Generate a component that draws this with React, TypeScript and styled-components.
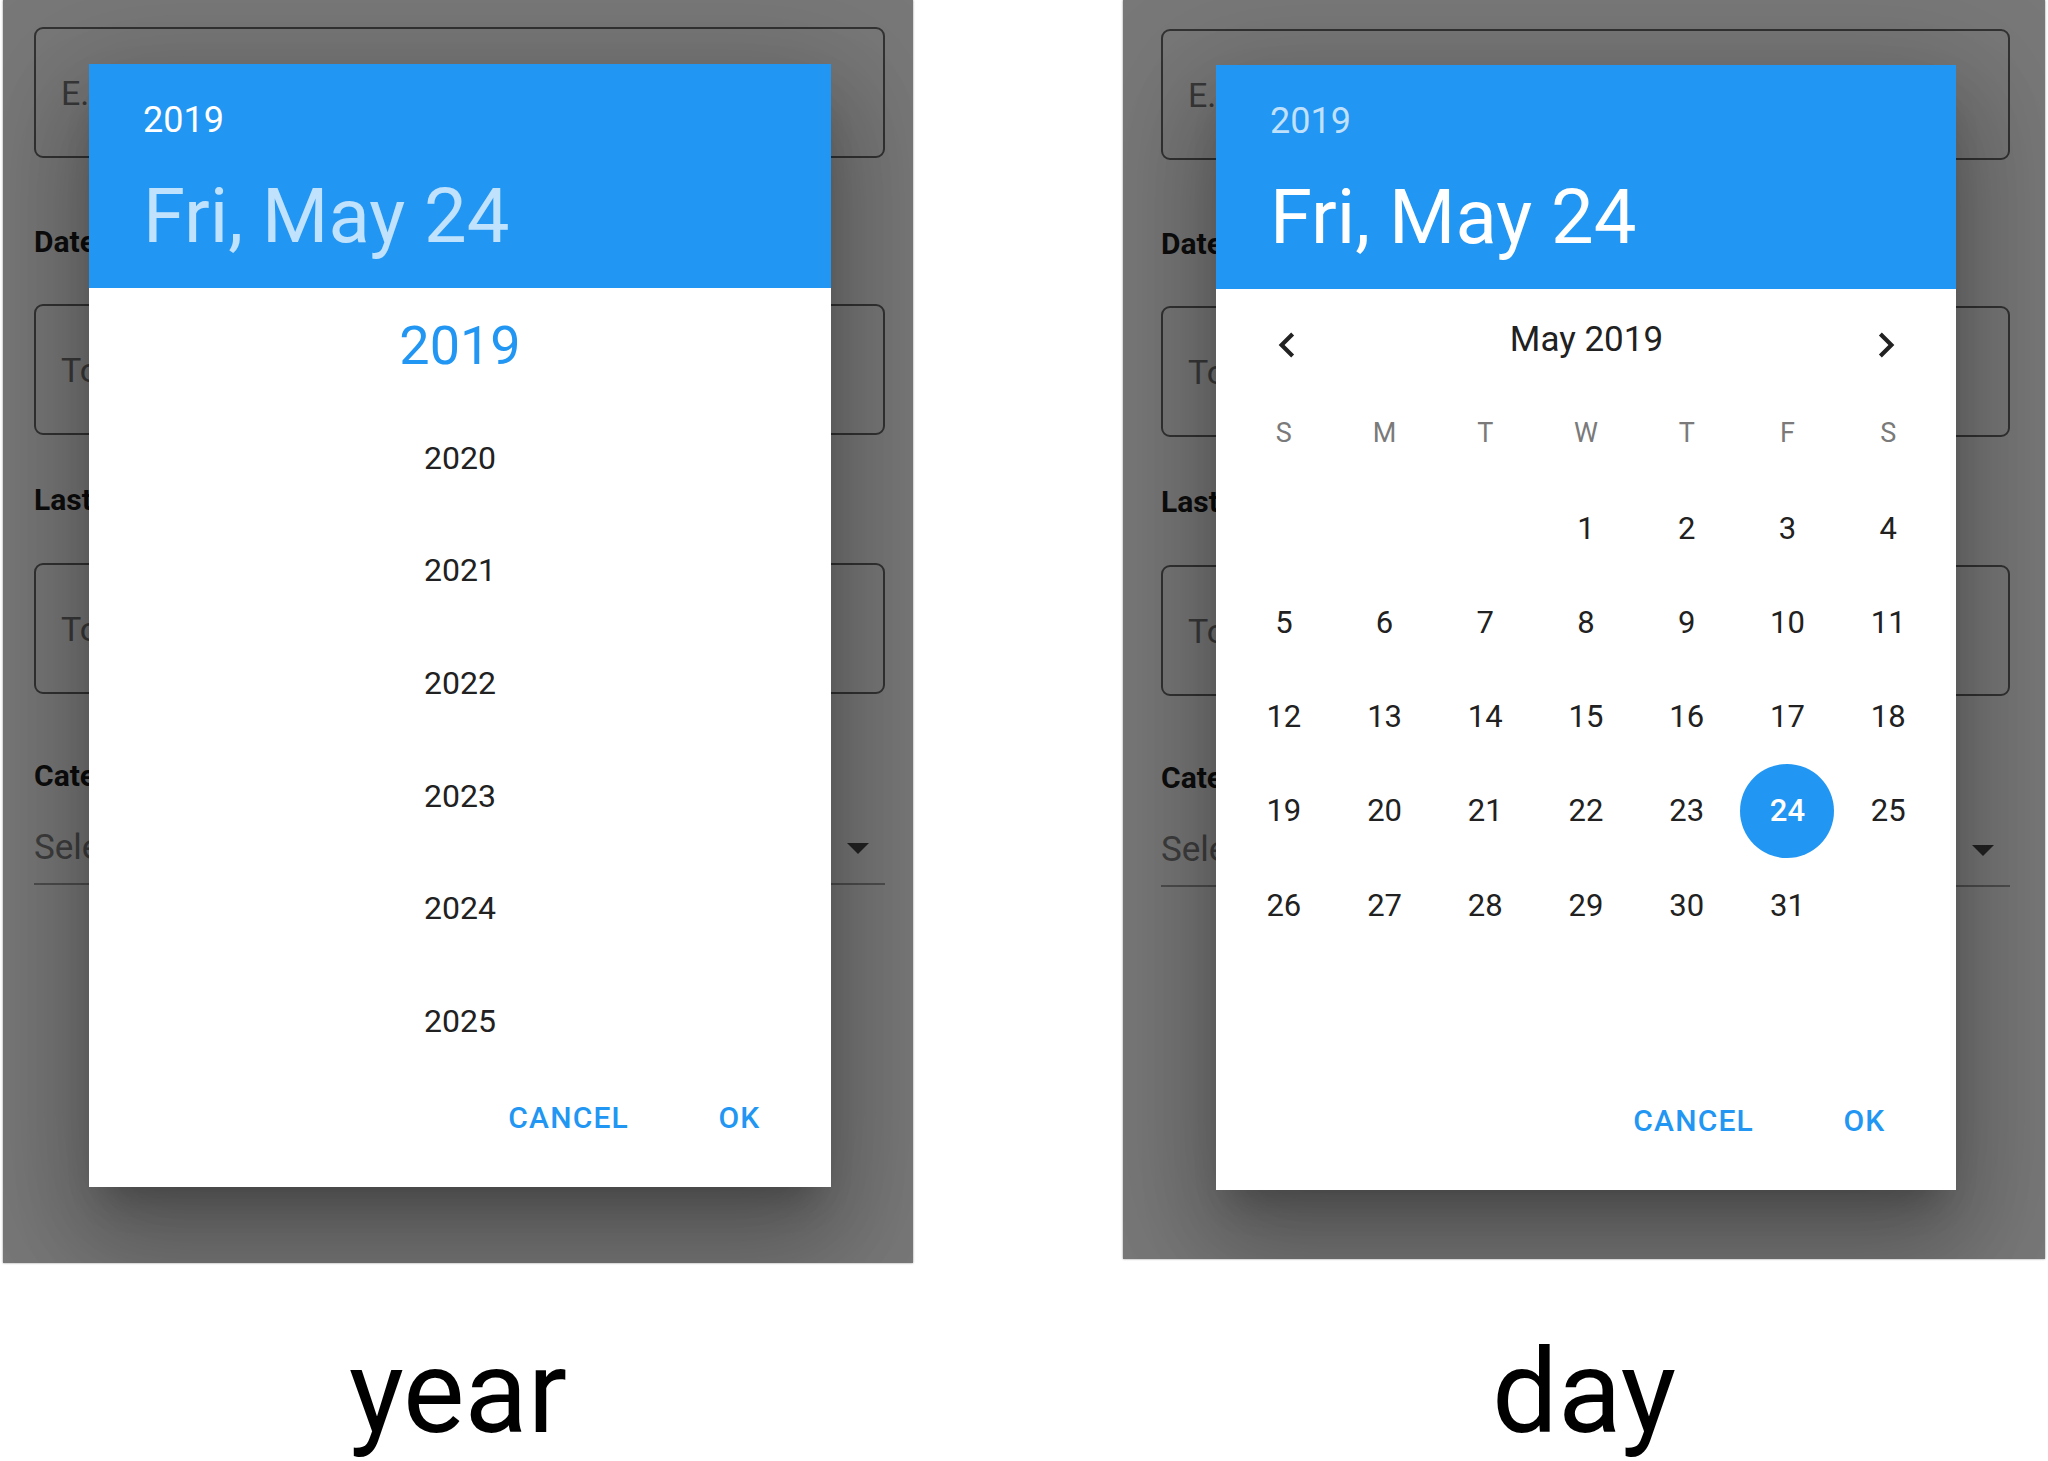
import React from "react";
import styled, { createGlobalStyle } from "styled-components";

const BLUE = "#2196f3";
const FONT = `Roboto, "Noto Sans", "Liberation Sans", sans-serif`;

const GlobalStyle = createGlobalStyle`
  html, body { margin: 0; padding: 0; background: #fff; }
  body { font-family: ${FONT}; -webkit-font-smoothing: antialiased; }
  * { box-sizing: border-box; }
`;

const Page = styled.div`
  display: flex;
  align-items: flex-start;
  gap: 210px;
  padding-left: 3px;
  width: 2048px;
  height: 1461px;
  overflow: hidden;
`;

const Column = styled.div<{ $width: number }>`
  width: ${(p) => p.$width}px;
  flex: none;
  display: grid;
  grid-template-rows: 1263px auto;
  justify-items: center;
  align-items: start;
`;

const Screen = styled.div<{ $height: number }>`
  position: relative;
  width: 100%;
  height: ${(p) => p.$height}px;
  overflow: hidden;
  background: #fff;
  box-shadow: 0 0 2px rgba(0, 0, 0, 0.45);
`;

/* ---------- form sitting behind the modal ---------- */

const Form = styled.div<{ $pad: string }>`
  display: flex;
  flex-direction: column;
  padding: ${(p) => p.$pad};
`;

const Field = styled.div`
  height: 131px;
  flex: none;
  border: 2px solid #6b6b6b;
  border-radius: 9px;
  display: flex;
  align-items: center;
  padding-left: 25px;
  font-size: 34px;
  color: #7a7a7a;
  white-space: nowrap;
  overflow: hidden;
`;

const Label = styled.div<{ $before: number; $after: number }>`
  margin-top: ${(p) => p.$before}px;
  margin-bottom: ${(p) => p.$after}px;
  font-size: 30px;
  font-weight: 700;
  line-height: 40px;
  color: #1c1c1c;
  white-space: nowrap;
`;

const Select = styled.div`
  display: flex;
  align-items: center;
  justify-content: space-between;
  padding: 32px 0 15px;
  border-bottom: 2px solid #a3a3a3;
  font-size: 35px;
  line-height: 40px;
  color: #858585;
  white-space: nowrap;
`;

const SelectArrow = styled.svg`
  width: 22px;
  height: 11px;
  margin-right: 16px;
  fill: #4a4a4a;
  flex: none;
`;

const Backdrop = styled.div`
  position: absolute;
  inset: 0;
  background: rgba(0, 0, 0, 0.53);
`;

/* ---------- picker dialog ---------- */

const Dialog = styled.div<{ $left: number; $top: number; $width: number; $height: number }>`
  position: absolute;
  left: ${(p) => p.$left}px;
  top: ${(p) => p.$top}px;
  width: ${(p) => p.$width}px;
  height: ${(p) => p.$height}px;
  background: #fff;
  display: flex;
  flex-direction: column;
  overflow: hidden;
  box-shadow: 0 25px 34px -16px rgba(0, 0, 0, 0.22), 0 54px 85px 7px rgba(0, 0, 0, 0.18),
    0 30px 110px 24px rgba(0, 0, 0, 0.16);
`;

const Header = styled.div`
  flex: none;
  height: 224px;
  background: ${BLUE};
  padding: 31px 54px 0;
  display: flex;
  flex-direction: column;
`;

const HeaderYear = styled.div<{ $active: boolean }>`
  font-size: 36px;
  line-height: 50px;
  color: ${(p) => (p.$active ? "#fff" : "rgba(255,255,255,0.72)")};
`;

const HeaderDate = styled.div<{ $active: boolean }>`
  margin-top: 26px;
  font-size: 76px;
  line-height: 90px;
  color: ${(p) => (p.$active ? "#fff" : "rgba(255,255,255,0.72)")};
  white-space: nowrap;
`;

const YearList = styled.div`
  flex: none;
  height: 790px;
  padding-top: 1px;
  display: flex;
  flex-direction: column;
  overflow: hidden;
`;

const YearItem = styled.div<{ $selected?: boolean }>`
  flex: none;
  height: 112.6px;
  display: flex;
  align-items: center;
  justify-content: center;
  font-size: ${(p) => (p.$selected ? 54 : 32)}px;
  color: ${(p) => (p.$selected ? BLUE : "#212121")};
`;

const MonthNav = styled.div`
  flex: none;
  margin-top: 31px;
  height: 50px;
  padding: 0 45px 0 46px;
  display: flex;
  align-items: center;
  justify-content: space-between;
`;

const NavIcon = styled.svg`
  width: 50px;
  height: 50px;
  fill: #222;
  flex: none;
`;

const MonthTitle = styled.div`
  font-size: 35px;
  color: #212121;
  margin-top: -11px;
`;

const CalendarGrid = styled.div`
  width: 705px;
  align-self: center;
  display: grid;
  grid-template-columns: repeat(7, 1fr);
`;

const WeekRow = styled(CalendarGrid)`
  margin-top: 38px;
  height: 50px;
  align-items: center;
`;

const Weekday = styled.div`
  text-align: center;
  font-size: 27px;
  color: #7a7a7a;
`;

const DayGrid = styled(CalendarGrid)`
  margin-top: 23px;
  grid-auto-rows: 94.3px;
`;

const DayCell = styled.div<{ $selected?: boolean }>`
  justify-self: center;
  width: 94px;
  height: 94px;
  border-radius: 50%;
  display: flex;
  align-items: center;
  justify-content: center;
  font-size: 31px;
  font-weight: ${(p) => (p.$selected ? 500 : 400)};
  color: ${(p) => (p.$selected ? "#fff" : "#212121")};
  background: ${(p) => (p.$selected ? BLUE : "transparent")};
`;

const Actions = styled.div`
  flex: none;
  margin-top: auto;
  display: flex;
  justify-content: flex-end;
  gap: 21px;
  padding: 0 20px 52px;
`;

const ActionButton = styled.button`
  min-width: 143px;
  height: 36px;
  padding: 0 18px;
  border: none;
  background: none;
  font-family: ${FONT};
  font-size: 30px;
  font-weight: 500;
  letter-spacing: 1.2px;
  text-transform: uppercase;
  color: ${BLUE};
  display: flex;
  align-items: center;
  justify-content: center;
`;

const Caption = styled.div<{ $gap: number; $size: number }>`
  margin-top: ${(p) => p.$gap}px;
  font-size: ${(p) => p.$size}px;
  line-height: 120px;
  color: #000;
`;

/* ---------- pieces ---------- */

const BackgroundForm: React.FC<{ pad: string }> = ({ pad }) => (
  <Form $pad={pad}>
    <Field>E.g. Pay the rent</Field>
    <Label $before={64} $after={42}>Date due</Label>
    <Field>Today</Field>
    <Label $before={45} $after={43}>Last reminder</Label>
    <Field>Today</Field>
    <Label $before={62} $after={0}>Category</Label>
    <Select>
      <span>Select a category</span>
      <SelectArrow viewBox="7 10 10 5">
        <path d="M7 10l5 5 5-5z" />
      </SelectArrow>
    </Select>
  </Form>
);

const PickerHeader: React.FC<{ yearActive: boolean }> = ({ yearActive }) => (
  <Header>
    <HeaderYear $active={yearActive}>2019</HeaderYear>
    <HeaderDate $active={!yearActive}>Fri, May 24</HeaderDate>
  </Header>
);

const PickerActions: React.FC = () => (
  <Actions>
    <ActionButton>Cancel</ActionButton>
    <ActionButton>OK</ActionButton>
  </Actions>
);

const YEARS = [2019, 2020, 2021, 2022, 2023, 2024, 2025];
const WEEKDAYS = ["S", "M", "T", "W", "T", "F", "S"];
const FIRST_WEEKDAY = 3; // May 1st 2019 is a Wednesday
const DAYS_IN_MONTH = 31;
const SELECTED_DAY = 24;

const YearPicker: React.FC = () => (
  <>
    <PickerHeader yearActive />
    <YearList>
      {YEARS.map((y) => (
        <YearItem key={y} $selected={y === 2019}>
          {y}
        </YearItem>
      ))}
    </YearList>
    <PickerActions />
  </>
);

const DayPicker: React.FC = () => {
  const cells: (number | null)[] = [
    ...Array.from({ length: FIRST_WEEKDAY }, () => null),
    ...Array.from({ length: DAYS_IN_MONTH }, (_, i) => i + 1),
  ];
  return (
    <>
      <PickerHeader yearActive={false} />
      <MonthNav>
        <NavIcon viewBox="0 0 24 24">
          <path d="M15.41 7.41L14 6l-6 6 6 6 1.41-1.41L10.83 12z" />
        </NavIcon>
        <MonthTitle>May 2019</MonthTitle>
        <NavIcon viewBox="0 0 24 24">
          <path d="M10 6L8.59 7.41 13.17 12l-4.58 4.59L10 18l6-6z" />
        </NavIcon>
      </MonthNav>
      <WeekRow>
        {WEEKDAYS.map((d, i) => (
          <Weekday key={i}>{d}</Weekday>
        ))}
      </WeekRow>
      <DayGrid>
        {cells.map((d, i) =>
          d === null ? (
            <div key={`blank-${i}`} />
          ) : (
            <DayCell key={d} $selected={d === SELECTED_DAY}>
              {d}
            </DayCell>
          )
        )}
      </DayGrid>
      <PickerActions />
    </>
  );
};

export default function App() {
  return (
    <>
      <GlobalStyle />
      <Page>
        <Column $width={910}>
          <Screen $height={1263}>
            <BackgroundForm pad="27px 28px 0 31px" />
            <Backdrop />
            <Dialog $left={86} $top={64} $width={742} $height={1123}>
              <YearPicker />
            </Dialog>
          </Screen>
          <Caption $gap={69} $size={116}>year</Caption>
        </Column>
        <Column $width={922}>
          <Screen $height={1259}>
            <BackgroundForm pad="29px 35px 0 38px" />
            <Backdrop />
            <Dialog $left={93} $top={65} $width={740} $height={1125}>
              <DayPicker />
            </Dialog>
          </Screen>
          <Caption $gap={69} $size={117}>day</Caption>
        </Column>
      </Page>
    </>
  );
}
